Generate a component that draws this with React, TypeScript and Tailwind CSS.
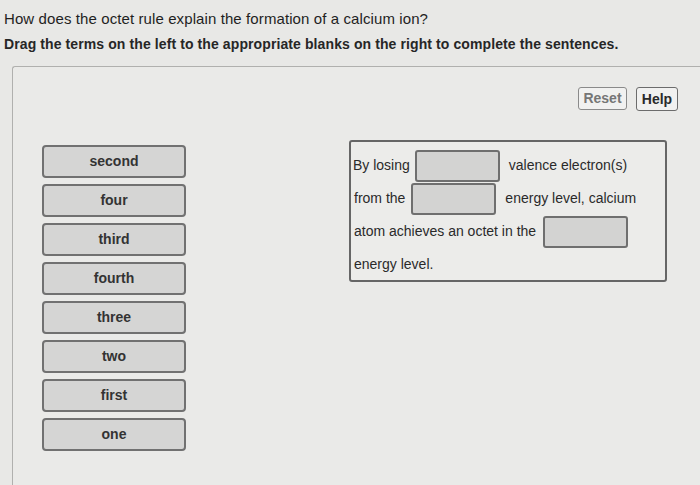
const terms = ['second', 'four', 'third', 'fourth', 'three', 'two', 'first', 'one']

function Blank({ className = '' }: { className?: string }) {
  return (
    <div
      className={`h-[32px] w-[85px] shrink-0 rounded-[3px] border-2 border-[#6f6f6f] bg-[#d3d3d2] ${className}`}
    ></div>
  )
}

export default function App() {
  return (
    <div className="h-[485px] w-[700px] overflow-hidden bg-[#e8e8e6] font-['Liberation_Sans',Arial,sans-serif] text-[#1f1f1f]">
      <div className="px-[4px] pt-[10px]">
        <p className="text-[15px] leading-[17px] tracking-[0.1px]">
          How does the octet rule explain the formation of a calcium ion?
        </p>
        <p className="mt-[9px] text-[14px] font-bold leading-[17px] tracking-[0.1px] text-[#262626]">
          Drag the terms on the left to the appropriate blanks on the right to complete the sentences.
        </p>
      </div>

      <div className="ml-[12px] mt-[13px] h-[440px] w-[688px] rounded-tl-[3px] border-l border-t border-[#b0b0ae] bg-[#eaeae8]">
        <div className="flex justify-end gap-[9px] pr-[22px] pt-[20px]">
          <button className="h-[23px] w-[49px] rounded-[3px] border border-[#8a8a8a] bg-[#f1f1f0] text-[14px] font-bold text-[#767676]">
            Reset
          </button>
          <button className="h-[24px] w-[42px] rounded-[3px] border border-[#6c6c6c] bg-[#f1f1f0] text-[14px] font-bold text-[#2a2a2a]">
            Help
          </button>
        </div>

        <div className="mt-[29px] flex items-start">
          <div className="ml-[29px] mt-[5px] flex w-[144px] flex-col gap-[6px]">
            {terms.map((t) => (
              <div
                key={t}
                className="flex h-[33px] items-center justify-center rounded-[4px] border-2 border-[#717171] bg-[#d5d5d4] text-[14px] font-semibold text-[#333]"
              >
                {t}
              </div>
            ))}
          </div>

          <div className="ml-[163px] h-[142px] w-[318px] rounded-[3px] border-2 border-[#666] bg-[#ececea] pl-[2px] pt-[7px] text-[14px] text-[#2a2a2a]">
            <div className="flex h-[33px] items-center">
              <span>By losing</span>
              <Blank className="ml-[5px]" />
              <span className="ml-[9px]">valence electron(s)</span>
            </div>
            <div className="flex h-[33px] items-center">
              <span className="ml-[1px]">from the</span>
              <Blank className="ml-[6px]" />
              <span className="ml-[9px]">energy level, calcium</span>
            </div>
            <div className="flex h-[33px] items-center">
              <span className="ml-[1px]">atom achieves an octet in the</span>
              <Blank className="ml-[7px]" />
            </div>
            <div className="flex h-[33px] items-center">
              <span className="ml-[1px]">energy level.</span>
            </div>
          </div>
        </div>
      </div>
    </div>
  )
}
